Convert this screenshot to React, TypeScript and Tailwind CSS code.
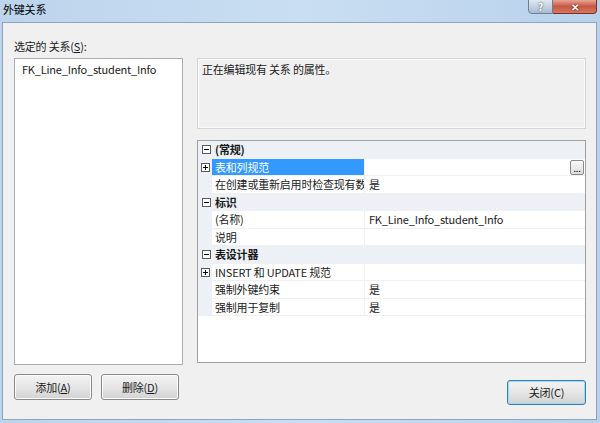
import React from 'react'

const font = { fontFamily: '"Noto Sans CJK SC", "Noto Sans", sans-serif' }

type Row =
  | { kind: 'cat'; label: string }
  | { kind: 'prop'; label: string; value?: string; expand?: boolean; selected?: boolean; dots?: boolean }

const rows: Row[] = [
  { kind: 'cat', label: '(常规)' },
  { kind: 'prop', label: '表和列规范', expand: true, selected: true, dots: true },
  { kind: 'prop', label: '在创建或重新启用时检查现有数据', value: '是' },
  { kind: 'cat', label: '标识' },
  { kind: 'prop', label: '(名称)', value: 'FK_Line_Info_student_Info' },
  { kind: 'prop', label: '说明' },
  { kind: 'cat', label: '表设计器' },
  { kind: 'prop', label: 'INSERT 和 UPDATE 规范', expand: true },
  { kind: 'prop', label: '强制外键约束', value: '是' },
  { kind: 'prop', label: '强制用于复制', value: '是' },
]

function Box({ plus }: { plus?: boolean }) {
  return (
    <svg width="9" height="9" viewBox="0 0 9 9" className="shrink-0">
      <rect x="0.5" y="0.5" width="8" height="8" fill="#fff" stroke="#5a5a5a" />
      <line x1="2" y1="4.5" x2="7" y2="4.5" stroke="#000" />
      {plus && <line x1="4.5" y1="2" x2="4.5" y2="7" stroke="#000" />}
    </svg>
  )
}

function Btn({ children, primary, className = '' }: { children: React.ReactNode; primary?: boolean; className?: string }) {
  return (
    <div className={`flex items-center justify-center rounded-[3px] border text-[11px] text-[#1a1a1a] bg-gradient-to-b from-[#f3f3f3] via-[#e6e6e6] to-[#d2d2d2] ${primary ? 'border-[#3c7fb1] shadow-[inset_0_0_0_1px_#9fd8f6]' : 'border-[#8a8a8a] shadow-[inset_0_0_0_1px_#fbfbfb]'} ${className}`}>
      {children}
    </div>
  )
}

export default function App() {
  return (
    <div className="w-[600px] h-[423px] flex flex-col bg-gradient-to-r from-[#bcd4ec] via-[#c9def2] to-[#b8d2ec] overflow-hidden tracking-[-0.2px]" style={font}>
      {/* Title bar */}
      <div className="h-[22px] flex items-start justify-between shrink-0">
        <span className="pl-[3px] pt-[1px] text-[11px] leading-[16px] text-black">外键关系</span>
        <div className="flex mr-[3px] -mt-px">
          <div className="w-[25px] h-[15px] rounded-bl-[4px] border border-[#6d7f95] bg-gradient-to-b from-[#dfe8f2] to-[#a9bbd1] flex items-center justify-center text-white text-[10px] font-bold leading-[13px] [text-shadow:0_0_2px_#333]">?</div>
          <div className="w-[44px] h-[15px] rounded-br-[4px] border border-l-0 border-[#7a3028] bg-gradient-to-b from-[#e8a493] via-[#c75646] to-[#d27a5f] flex items-center justify-center text-white text-[10px] font-bold leading-[13px] [text-shadow:0_0_2px_#400]">✕</div>
        </div>
      </div>

      {/* Client */}
      <div className="flex-1 mx-[3px] mb-[3px] ml-[2px] border border-[#8da4be] bg-[#f0f0f0] flex gap-[14px] pl-[11px] pr-[10px]">
        {/* Left column */}
        <div className="w-[169px] flex flex-col">
          <div className="mt-[15px] h-[16px] text-[11px] leading-[16px] text-[#1a1a1a]">
            选定的 关系(<span className="underline">S</span>):
          </div>
          <div className="mt-[4px] h-[307px] border border-[#abadb3] bg-white px-[7px] pt-[2px] text-[11px] leading-[16px] text-[#1a1a1a]">
            FK_Line_Info_student_Info
          </div>
          <div className="mt-[9px] flex gap-[9px]">
            <Btn className="w-[78px] h-[26px]">添加(<span className="underline">A</span>)</Btn>
            <Btn className="w-[78px] h-[26px]">删除(<span className="underline">D</span>)</Btn>
          </div>
        </div>

        {/* Right column */}
        <div className="flex-1 flex flex-col">
          <div className="mt-[35px] h-[71px] border border-[#d5d5d5] shadow-[inset_0_0_0_1px_#fafafa] px-[4px] pt-[2px] text-[11px] leading-[16px] text-[#1a1a1a]">
            正在编辑现有 关系 的属性。
          </div>
          <div className="mt-[11px] h-[223px] border border-[#a0a0a0] bg-white text-[11px] text-[#1a1a1a] flex flex-col">
            {rows.map((r, i) =>
              r.kind === 'cat' ? (
                <div key={i} className="h-[17.5px] flex items-center bg-[#edf0f4] shrink-0">
                  <div className="w-[16px] flex justify-center"><Box /></div>
                  <span className="pl-[1px] font-bold leading-none">{r.label}</span>
                </div>
              ) : (
                <div key={i} className="h-[17.5px] flex shrink-0">
                  <div className="w-[14px] bg-[#edf0f4] flex items-center justify-center shrink-0">
                    {r.expand && <Box plus />}
                  </div>
                  <div className={`w-[152px] shrink-0 flex items-center pl-[3px] overflow-hidden whitespace-nowrap border-b border-[#f0f0f0] ${r.selected ? 'bg-[#3399ff] text-white' : ''}`}>
                    <span className="overflow-hidden">{r.label}</span>
                  </div>
                  <div className="flex-1 flex items-center pl-[4px] border-l border-b border-[#f0f0f0] relative">
                    {r.value}
                    {r.dots && (
                      <div className="absolute right-[1px] top-[1px] w-[14px] h-[15px] rounded-[2px] border border-[#8a8a8a] bg-gradient-to-b from-[#fafafa] to-[#dcdcdc] flex items-end justify-center text-[9px] leading-[11px] text-black">...</div>
                    )}
                  </div>
                </div>
              )
            )}
          </div>
          <div className="mt-[17px] flex justify-end">
            <Btn primary className="w-[79px] h-[25px]">关闭(C)</Btn>
          </div>
        </div>
      </div>
    </div>
  )
}
